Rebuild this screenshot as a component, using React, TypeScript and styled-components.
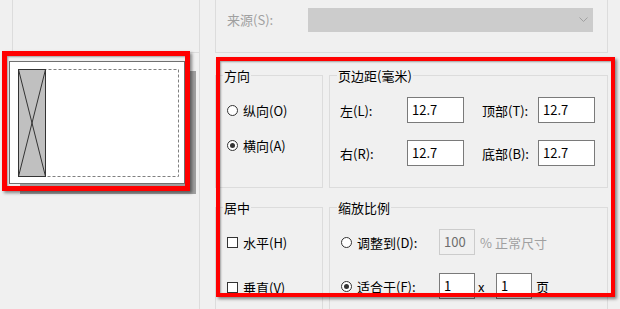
import React from "react";
import styled, { createGlobalStyle } from "styled-components";

const GlobalStyle = createGlobalStyle`
  body {
    margin: 0;
    background: #f0f0f0;
    font-family: "Noto Sans CJK SC", "Liberation Sans", sans-serif;
    font-size: 13px;
    color: #000;
  }
`;

const Screen = styled.div`
  position: relative;
  display: flex;
  width: 620px;
  height: 309px;
  overflow: hidden;
  background: #f0f0f0;
`;

const LeftPane = styled.div`
  width: 200px;
  flex: none;
  box-sizing: border-box;
  border-right: 1px solid #dcdcdc;
`;

const PaperGroup = styled.div`
  margin-left: 12px;
  height: 53px;
  box-sizing: border-box;
  border-left: 1px solid #dcdcdc;
  border-bottom: 1px solid #dcdcdc;
`;

const PreviewPage = styled.div`
  margin: 8px 0 0 9px;
  width: 176px;
  height: 123px;
  box-sizing: border-box;
  background: #fff;
  border: 1px solid #707070;
  box-shadow: 11px 10px 0 #a0a0a0;
  svg {
    display: block;
  }
`;

const RightPane = styled.div`
  flex: 1;
  padding: 0 12px 0 15px;
`;

const SourceGroup = styled.div`
  height: 53px;
  box-sizing: border-box;
  border: 1px solid #dcdcdc;
  border-top: none;
  display: flex;
  align-items: flex-start;
  padding: 8px 0 0 11px;
`;

const SourceLabel = styled.span`
  width: 81px;
  line-height: 24px;
  color: #a0a0a0;
`;

const Combo = styled.div`
  width: 285px;
  height: 24px;
  box-sizing: border-box;
  background: #cccccc;
  border: 1px solid #cccccc;
  display: flex;
  align-items: center;
  justify-content: flex-end;
  padding-right: 4px;
`;

const Groups = styled.div`
  margin-top: 14px;
  display: grid;
  grid-template-columns: 108px 279px;
  grid-template-rows: 121px 120px;
  column-gap: 6px;
  row-gap: 11px;
`;

const Group = styled.fieldset`
  margin: 0;
  padding: 0;
  min-width: 0;
  height: 100%;
  box-sizing: border-box;
  border: 1px solid #dcdcdc;
`;

const Legend = styled.legend`
  margin-left: 7px;
  padding: 0 1px;
  line-height: 17px;
`;

const Body = styled.div<{ $top: number; $gap: number; $left: number }>`
  display: flex;
  flex-direction: column;
  padding: ${(p) => p.$top}px 0 0 ${(p) => p.$left}px;
  gap: ${(p) => p.$gap}px;
`;

const Option = styled.label<{ $w?: number }>`
  display: flex;
  align-items: center;
  gap: 5px;
  height: 20px;
  line-height: 17px;
  flex: none;
  width: ${(p) => (p.$w ? `${p.$w}px` : "auto")};
`;

const RadioMark = styled.span<{ $on?: boolean }>`
  width: 11px;
  height: 11px;
  box-sizing: border-box;
  border: 1px solid #333;
  border-radius: 50%;
  background: #fff;
  display: inline-flex;
  align-items: center;
  justify-content: center;
  flex: none;
  &::after {
    content: "";
    width: 5px;
    height: 5px;
    border-radius: 50%;
    background: ${(p) => (p.$on ? "#333" : "transparent")};
  }
`;

const CheckMark = styled.span`
  width: 11px;
  height: 11px;
  box-sizing: border-box;
  border: 1px solid #333;
  background: #fff;
  flex: none;
`;

const MarginGrid = styled.div`
  display: grid;
  grid-template-columns: 67px 57px 74px 57px;
  grid-auto-rows: 26px;
  row-gap: 17px;
  padding: 13px 0 0 10px;
  align-items: center;
`;

const FieldLabel = styled.span<{ $indent?: number }>`
  padding-left: ${(p) => p.$indent || 0}px;
  line-height: 17px;
`;

const TextBox = styled.div<{ $w?: number; $disabled?: boolean }>`
  width: ${(p) => p.$w || 57}px;
  height: 26px;
  box-sizing: border-box;
  border: 1px solid ${(p) => (p.$disabled ? "#cccccc" : "#7a7a7a")};
  background: ${(p) => (p.$disabled ? "#f0f0f0" : "#fff")};
  color: ${(p) => (p.$disabled ? "#6d6d6d" : "#000")};
  padding: 3px 0 0 4px;
  line-height: 17px;
`;

const ScaleRow = styled.div`
  display: flex;
  align-items: center;
  height: 26px;
`;

const Hint = styled.span`
  margin-left: 5px;
  color: #a0a0a0;
`;

const Times = styled.span`
  width: 21px;
  padding-left: 3px;
  box-sizing: border-box;
`;

const Unit = styled.span`
  margin-left: 4px;
`;

const Highlight = styled.div<{ $x: number; $y: number; $w: number; $h: number; $b: number }>`
  position: absolute;
  left: ${(p) => p.$x}px;
  top: ${(p) => p.$y}px;
  width: ${(p) => p.$w}px;
  height: ${(p) => p.$h}px;
  box-sizing: border-box;
  border: ${(p) => p.$b}px solid #ff0000;
  box-shadow: 2px 2px 3px rgba(0, 0, 0, 0.45), inset 1px 1px 2px rgba(0, 0, 0, 0.35);
  pointer-events: none;
`;

function PagePreview() {
  return (
    <PreviewPage>
      <svg width="174" height="121" viewBox="0 0 174 121">
        <rect x="8.5" y="7.5" width="160" height="107" fill="none" stroke="#808080" strokeDasharray="3 2" />
        <rect x="8.5" y="7.5" width="27" height="107" fill="#c0c0c0" stroke="#333" />
        <line x1="8.5" y1="7.5" x2="35.5" y2="114.5" stroke="#333" />
        <line x1="35.5" y1="7.5" x2="8.5" y2="114.5" stroke="#333" />
      </svg>
    </PreviewPage>
  );
}

export default function App() {
  return (
    <>
      <GlobalStyle />
      <Screen>
        <LeftPane>
          <PaperGroup />
          <PagePreview />
        </LeftPane>
        <RightPane>
          <SourceGroup>
            <SourceLabel>来源(S):</SourceLabel>
            <Combo>
              <svg width="9" height="6" viewBox="0 0 9 6">
                <path d="M0.5 0.5 L4.5 4.5 L8.5 0.5" fill="none" stroke="#a0a0a0" />
              </svg>
            </Combo>
          </SourceGroup>
          <Groups>
            <Group>
              <Legend>方向</Legend>
              <Body $top={16} $gap={15} $left={11}>
                <Option>
                  <RadioMark />
                  纵向(O)
                </Option>
                <Option>
                  <RadioMark $on />
                  横向(A)
                </Option>
              </Body>
            </Group>
            <Group>
              <Legend>页边距(毫米)</Legend>
              <MarginGrid>
                <FieldLabel>左(L):</FieldLabel>
                <TextBox>12.7</TextBox>
                <FieldLabel $indent={18}>顶部(T):</FieldLabel>
                <TextBox>12.7</TextBox>
                <FieldLabel>右(R):</FieldLabel>
                <TextBox>12.7</TextBox>
                <FieldLabel $indent={18}>底部(B):</FieldLabel>
                <TextBox>12.7</TextBox>
              </MarginGrid>
            </Group>
            <Group>
              <Legend>居中</Legend>
              <Body $top={16} $gap={25} $left={11}>
                <Option>
                  <CheckMark />
                  水平(H)
                </Option>
                <Option>
                  <CheckMark />
                  垂直(V)
                </Option>
              </Body>
            </Group>
            <Group>
              <Legend>缩放比例</Legend>
              <Body $top={13} $gap={18} $left={11}>
                <ScaleRow>
                  <Option $w={98}>
                    <RadioMark />
                    调整到(D):
                  </Option>
                  <TextBox $w={36} $disabled>100</TextBox>
                  <Hint>% 正常尺寸</Hint>
                </ScaleRow>
                <ScaleRow>
                  <Option $w={98}>
                    <RadioMark $on />
                    适合于(F):
                  </Option>
                  <TextBox $w={36}>1</TextBox>
                  <Times>x</Times>
                  <TextBox $w={36}>1</TextBox>
                  <Unit>页</Unit>
                </ScaleRow>
              </Body>
            </Group>
          </Groups>
        </RightPane>
        <Highlight $x={2} $y={51} $w={188} $h={140} $b={5} />
        <Highlight $x={216} $y={57} $w={399} $h={240} $b={4} />
      </Screen>
    </>
  );
}
